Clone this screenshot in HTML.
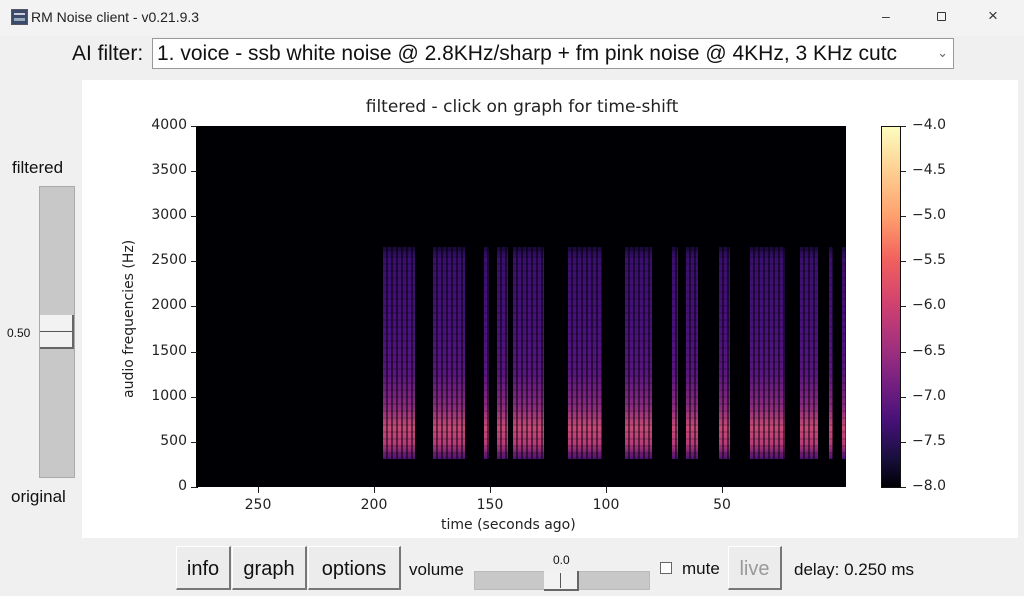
<!DOCTYPE html>
<html><head><meta charset="utf-8"><style>
*{margin:0;padding:0;box-sizing:border-box}
body{width:1024px;height:596px;overflow:hidden;background:#f0f0f0;font-family:"Liberation Sans",sans-serif;position:relative;color:#111}
.a{position:absolute}
.fig{left:82px;top:80px;width:936px;height:458px;background:#fff}
.plot{left:197px;top:126px;width:649px;height:361px;background:#000004;overflow:hidden}
.bar{position:absolute;top:121px;height:212px;
background:repeating-linear-gradient(90deg,rgba(0,0,4,0) 0,rgba(0,0,4,0) 3px,rgba(0,0,4,.5) 3px,rgba(0,0,4,.5) 5px),
repeating-linear-gradient(0deg,rgba(0,0,4,0) 0,rgba(0,0,4,0) 5px,rgba(0,0,4,.15) 5px,rgba(0,0,4,.15) 7px),
linear-gradient(to bottom,#1a0a3a 0%,#3a0f6e 5%,#4a127c 40%,#5a1680 60%,#8a2a80 75%,#c84a78 85%,#b83a7a 93%,#4a1070 100%)}
.pt{font-family:"DejaVu Sans",sans-serif;color:#222}
.yl{position:absolute;width:60px;text-align:right;font-size:14px;left:127px;font-family:"DejaVu Sans",sans-serif;color:#222}
.tk{position:absolute;background:#222}
.xl{position:absolute;font-size:14px;width:60px;text-align:center;top:497px;font-family:"DejaVu Sans",sans-serif;color:#222}
.cl{position:absolute;left:912px;font-size:14px;font-family:"DejaVu Sans",sans-serif;color:#222}
.btn{position:absolute;top:546px;height:44px;background:#ececec;border:1px solid #fff;border-right:2px solid #777;border-bottom:2px solid #777;font-size:20px;text-align:center;line-height:44px}
</style></head><body>
<div class="a" style="left:0;top:0;width:1024px;height:36px;background:#f3f3f3"></div>
<div class="a" style="left:11px;top:9px;width:17px;height:16px;background:#3a4a6a;border:1px solid #556"><div class="a" style="left:2px;top:8px;width:11px;height:3px;background:#9ab"></div><div class="a" style="left:2px;top:3px;width:11px;height:2px;background:#ccd"></div></div>
<div class="a" style="left:31px;top:9px;font-size:14px;color:#222">RM Noise client - v0.21.9.3</div>
<div class="a" style="left:882px;top:8px;font-size:14px;color:#333">–</div>
<div class="a" style="left:937px;top:12px;width:9px;height:9px;border:1px solid #333;border-radius:1px"></div>
<div class="a" style="left:988px;top:6px;font-size:17px;color:#333">×</div>
<div class="a" style="left:72px;top:42px;font-size:21px">AI filter:</div>
<div class="a" style="left:152px;top:38px;width:802px;height:31px;background:#fff;border:1px solid #999;font-size:21px;padding:3px 0 0 4px;white-space:nowrap;overflow:hidden">1. voice - ssb white noise @ 2.8KHz/sharp + fm pink noise @ 4KHz, 3 KHz cutc<span style="position:absolute;right:5px;top:6px;font-size:13px;color:#666">&#8964;</span></div>
<div class="a fig"></div>
<div class="a" style="left:12px;top:158px;font-size:17px">filtered</div>
<div class="a" style="left:39px;top:186px;width:36px;height:292px;background:#c8c8c8;border:1px solid #aaa"></div>
<div class="a" style="left:40px;top:315px;width:34px;height:34px;background:#f2f2f2;border-right:2px solid #666;border-bottom:2px solid #666"><div class="a" style="left:0;top:16px;width:32px;height:1px;background:#555"></div></div>
<div class="a" style="left:7px;top:326px;font-size:12px">0.50</div>
<div class="a" style="left:11px;top:487px;font-size:17px">original</div>
<div class="a pt" style="top:97px;width:600px;text-align:center;font-size:17px;left:222px">filtered - click on graph for time-shift</div>
<div class="a plot">
<div class="bar" style="left:186px;width:32px"></div>
<div class="bar" style="left:236px;width:32px"></div>
<div class="bar" style="left:287px;width:5px"></div>
<div class="bar" style="left:300px;width:11px"></div>
<div class="bar" style="left:316px;width:31px"></div>
<div class="bar" style="left:371px;width:34px"></div>
<div class="bar" style="left:428px;width:27px"></div>
<div class="bar" style="left:475px;width:6px"></div>
<div class="bar" style="left:489px;width:12px"></div>
<div class="bar" style="left:522px;width:11px"></div>
<div class="bar" style="left:553px;width:35px"></div>
<div class="bar" style="left:603px;width:18px"></div>
<div class="bar" style="left:632px;width:4px"></div>
<div class="bar" style="left:645px;width:4px"></div>
</div>
<div class="a" style="left:196px;top:126px;width:2px;height:362px;background:#000"></div>
<div class="yl" style="top:117px">4000</div><div class="tk" style="left:191px;top:126px;width:6px;height:1px"></div>
<div class="yl" style="top:162px">3500</div><div class="tk" style="left:191px;top:171px;width:6px;height:1px"></div>
<div class="yl" style="top:207px">3000</div><div class="tk" style="left:191px;top:216px;width:6px;height:1px"></div>
<div class="yl" style="top:252px">2500</div><div class="tk" style="left:191px;top:261px;width:6px;height:1px"></div>
<div class="yl" style="top:297px">2000</div><div class="tk" style="left:191px;top:306px;width:6px;height:1px"></div>
<div class="yl" style="top:343px">1500</div><div class="tk" style="left:191px;top:352px;width:6px;height:1px"></div>
<div class="yl" style="top:388px">1000</div><div class="tk" style="left:191px;top:397px;width:6px;height:1px"></div>
<div class="yl" style="top:433px">500</div><div class="tk" style="left:191px;top:442px;width:6px;height:1px"></div>
<div class="yl" style="top:478px">0</div><div class="tk" style="left:191px;top:487px;width:6px;height:1px"></div>
<div class="a pt" style="left:121px;top:398px;transform:rotate(-90deg);transform-origin:0 0;font-size:14px;white-space:nowrap">audio frequencies (Hz)</div>
<div class="tk" style="left:258px;top:487px;width:1px;height:6px"></div><div class="xl" style="left:228px">250</div>
<div class="tk" style="left:374px;top:487px;width:1px;height:6px"></div><div class="xl" style="left:344px">200</div>
<div class="tk" style="left:490px;top:487px;width:1px;height:6px"></div><div class="xl" style="left:460px">150</div>
<div class="tk" style="left:606px;top:487px;width:1px;height:6px"></div><div class="xl" style="left:576px">100</div>
<div class="tk" style="left:722px;top:487px;width:1px;height:6px"></div><div class="xl" style="left:692px">50</div>
<div class="a pt" style="left:441px;top:517px;font-size:14px">time (seconds ago)</div>
<div class="a" style="left:881px;top:126px;width:20px;height:362px;border:1px solid #111;background:linear-gradient(to bottom,#fcfdbf 0%,#fdd092 12%,#fe9f6d 25%,#f1605d 37%,#cd4071 50%,#9e2f7f 62%,#721f81 72%,#451077 82%,#180f3d 92%,#000004 100%)"></div>
<div class="cl" style="top:117px">−4.0</div><div class="tk" style="left:901px;top:126px;width:5px;height:1px"></div>
<div class="cl" style="top:162px">−4.5</div><div class="tk" style="left:901px;top:171px;width:5px;height:1px"></div>
<div class="cl" style="top:207px">−5.0</div><div class="tk" style="left:901px;top:216px;width:5px;height:1px"></div>
<div class="cl" style="top:252px">−5.5</div><div class="tk" style="left:901px;top:261px;width:5px;height:1px"></div>
<div class="cl" style="top:297px">−6.0</div><div class="tk" style="left:901px;top:306px;width:5px;height:1px"></div>
<div class="cl" style="top:343px">−6.5</div><div class="tk" style="left:901px;top:352px;width:5px;height:1px"></div>
<div class="cl" style="top:388px">−7.0</div><div class="tk" style="left:901px;top:397px;width:5px;height:1px"></div>
<div class="cl" style="top:433px">−7.5</div><div class="tk" style="left:901px;top:442px;width:5px;height:1px"></div>
<div class="cl" style="top:478px">−8.0</div><div class="tk" style="left:901px;top:487px;width:5px;height:1px"></div>
<div class="btn" style="left:176px;width:55px">info</div>
<div class="btn" style="left:232px;width:75px">graph</div>
<div class="btn" style="left:308px;width:93px">options</div>
<div class="a" style="left:409px;top:560px;font-size:17px">volume</div>
<div class="a" style="left:553px;top:553px;font-size:12px">0.0</div>
<div class="a" style="left:474px;top:571px;width:176px;height:19px;background:#c8c8c8;border:1px solid #bbb"></div>
<div class="a" style="left:544px;top:571px;width:35px;height:20px;background:#f2f2f2;border-right:2px solid #666;border-bottom:2px solid #666"><div class="a" style="left:16px;top:2px;width:1px;height:15px;background:#555"></div></div>
<div class="a" style="left:660px;top:562px;width:12px;height:12px;border:1px solid #666;background:#fff"></div>
<div class="a" style="left:682px;top:559px;font-size:17px">mute</div>
<div class="btn" style="left:728px;width:54px;color:#999">live</div>
<div class="a" style="left:794px;top:560px;font-size:17px">delay: 0.250 ms</div>
</body></html>
